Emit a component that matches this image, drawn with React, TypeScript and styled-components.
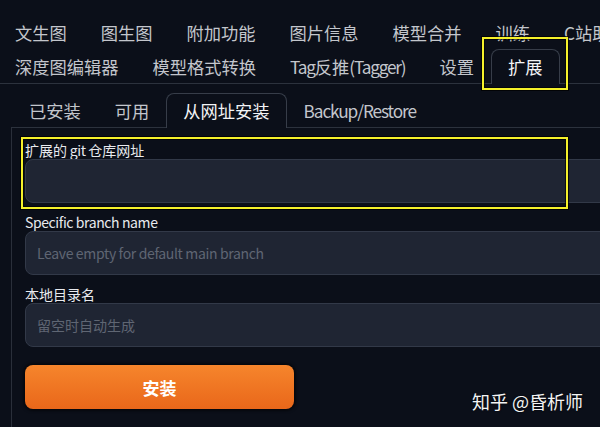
import React, { useState } from "react";
import styled, { createGlobalStyle } from "styled-components";

const GlobalStyle = createGlobalStyle`
  html, body {
    margin: 0;
    padding: 0;
    background: #0b0f19;
    overflow: hidden;
  }
  body {
    font-family: "Noto Sans CJK SC", "Noto Sans", sans-serif;
    color: #e5e7eb;
  }
  * { box-sizing: border-box; }
`;

const Page = styled.div`
  position: relative;
  width: 700px;
  height: 427px;
  padding-top: 15px;
`;

const TabNav = styled.div<{ $indent: number }>`
  display: flex;
  flex-wrap: wrap;
  margin-left: ${(p) => p.$indent}px;
  padding-left: ${(p) => (p.$indent > 0 ? 1 : 0)}px;
  border-bottom: 1px solid #2c323d;
`;

const TabButton = styled.button<{ $active?: boolean }>`
  position: relative;
  height: ${(p) => (p.$active ? 35 : 34)}px;
  margin-bottom: ${(p) => (p.$active ? -1 : 0)}px;
  padding: 0 16px;
  border: 1px solid ${(p) => (p.$active ? "#373d49" : "transparent")};
  border-bottom: none;
  border-radius: 8px 8px 0 0;
  background: ${(p) => (p.$active ? "#0b0f19" : "transparent")};
  color: ${(p) => (p.$active ? "#f3f4f6" : "#c3c6cc")};
  font-family: "Noto Sans CJK SC", "Noto Sans", sans-serif;
  font-size: 17.25px;
  line-height: 32px;
  white-space: nowrap;
  cursor: pointer;
`;

const Latin = styled.span<{ $tight: number }>`
  letter-spacing: ${(p) => p.$tight}px;
`;

const Section = styled.div`
  margin-top: 9px;
`;

const Panel = styled.div`
  margin-left: 11px;
  height: 300px;
  border-left: 1px solid #2a2f3a;
  padding: 13px 0 0 13px;
  display: flex;
  flex-direction: column;
  gap: 10px;
`;

const Field = styled.label`
  display: flex;
  flex-direction: column;
`;

const FieldLabel = styled.span`
  font-size: 14px;
  line-height: 18px;
  color: #e8eaee;
`;

const TextInput = styled.input`
  height: 44px;
  width: 100%;
  padding: 0 11px;
  background: #1f2533;
  border: 1px solid #323948;
  border-radius: 8px;
  color: #e5e7eb;
  font-family: "Noto Sans CJK SC", "Noto Sans", sans-serif;
  font-size: 14px;
  outline: none;
  &::placeholder {
    color: #5f6673;
  }
`;

const LatinInput = styled(TextInput)`
  &::placeholder {
    letter-spacing: -0.35px;
  }
`;

const PrimaryButton = styled.button`
  margin-top: 8px;
  width: 269px;
  height: 44px;
  border: none;
  border-radius: 8px;
  background: linear-gradient(to bottom, #f6852c, #e9671a);
  box-shadow: 0 0 3px 2px rgba(0, 0, 0, 0.55);
  color: #ffffff;
  font-family: "Noto Sans CJK SC", "Noto Sans", sans-serif;
  font-size: 17px;
  font-weight: 700;
  cursor: pointer;
`;

const Highlight = styled.div<{ $x: number; $y: number; $w: number; $h: number }>`
  position: absolute;
  left: ${(p) => p.$x}px;
  top: ${(p) => p.$y}px;
  width: ${(p) => p.$w}px;
  height: ${(p) => p.$h}px;
  border: 2px solid #f4f02a;
  box-shadow: 0 0 0 1px rgba(0, 0, 0, 0.75), inset 0 0 0 1px rgba(0, 0, 0, 0.6);
  pointer-events: none;
`;

const Watermark = styled.div`
  position: absolute;
  left: 472px;
  top: 388px;
  font-family: "Noto Sans CJK SC", sans-serif;
  font-size: 18px;
  color: #f4f4f4;
  text-shadow: 0 0 2px rgba(0, 0, 0, 0.8);
  white-space: nowrap;
`;

type Tab = { id: string; label: React.ReactNode };

const mainTabs: Tab[] = [
  { id: "txt2img", label: "文生图" },
  { id: "img2img", label: "图生图" },
  { id: "extras", label: "附加功能" },
  { id: "pnginfo", label: "图片信息" },
  { id: "merge", label: "模型合并" },
  { id: "train", label: "训练" },
  { id: "civitai", label: "C站助手" },
  { id: "depth", label: "深度图编辑器" },
  { id: "convert", label: "模型格式转换" },
  {
    id: "tagger",
    label: (
      <>
        <Latin $tight={-1.2}>Tag</Latin>反推<Latin $tight={-1.2}>(Tagger)</Latin>
      </>
    ),
  },
  { id: "settings", label: "设置" },
  { id: "extensions", label: "扩展" },
];

const subTabs: Tab[] = [
  { id: "installed", label: "已安装" },
  { id: "available", label: "可用" },
  { id: "url", label: "从网址安装" },
  { id: "backup", label: <Latin $tight={-1.1}>Backup/Restore</Latin> },
];

export default function App() {
  const [main, setMain] = useState("extensions");
  const [sub, setSub] = useState("url");
  return (
    <>
      <GlobalStyle />
      <Page>
        <TabNav $indent={-2}>
          {mainTabs.map((t) => (
            <TabButton key={t.id} $active={t.id === main} onClick={() => setMain(t.id)}>
              {t.label}
            </TabButton>
          ))}
        </TabNav>
        <Section>
          <TabNav $indent={11}>
            {subTabs.map((t) => (
              <TabButton key={t.id} $active={t.id === sub} onClick={() => setSub(t.id)}>
                {t.label}
              </TabButton>
            ))}
          </TabNav>
          <Panel>
            <Field>
              <FieldLabel>
                扩展的<Latin $tight={-0.4}> git </Latin>仓库网址
              </FieldLabel>
              <TextInput />
            </Field>
            <Field>
              <FieldLabel>
                <Latin $tight={-0.4}>Specific branch name</Latin>
              </FieldLabel>
              <LatinInput placeholder="Leave empty for default main branch" />
            </Field>
            <Field>
              <FieldLabel>本地目录名</FieldLabel>
              <TextInput placeholder="留空时自动生成" />
            </Field>
            <PrimaryButton>安装</PrimaryButton>
          </Panel>
        </Section>
        <Highlight $x={482} $y={37} $w={86} $h={53} />
        <Highlight $x={21} $y={137} $w={547} $h={72} />
        <Watermark>知乎 @昏析师</Watermark>
      </Page>
    </>
  );
}
